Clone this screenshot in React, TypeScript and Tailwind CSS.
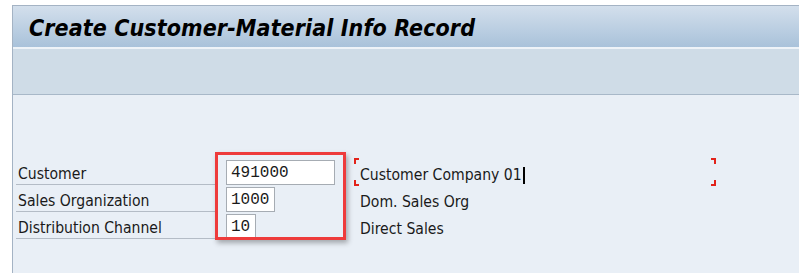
const uiFont = { fontFamily: '"DejaVu Sans Condensed", "DejaVu Sans", sans-serif' };

const fields = [
  { label: "Customer", value: "491000", width: "w-[109px]", text: "Customer Company 01" },
  { label: "Sales Organization", value: "1000", width: "w-[49px]", text: "Dom. Sales Org" },
  { label: "Distribution Channel", value: "10", width: "w-[30px]", text: "Direct Sales" },
];

// little red corner marks around the focused output field
const Corner = ({ className }: { className: string }) => (
  <span className={`absolute h-[6px] w-[5px] border-[#e2231a] ${className}`} />
);

export default function App() {
  return (
    <div className="w-[799px] h-[273px] overflow-hidden bg-white pl-[12px] pt-[5px]" style={uiFont}>
      <div className="flex h-full flex-col border-l border-t border-[#a4b3c4]">
        {/* Title */}
        <div className="flex h-[43px] items-center border-b-2 border-[#eef3f8] bg-gradient-to-b from-[#d3dfec] to-[#a9c2da] pl-[16px] pt-[3px]">
          <h1 className="text-[23px] font-bold italic tracking-[0.1px] text-black">
            Create Customer-Material Info Record
          </h1>
        </div>

        {/* Toolbar */}
        <div className="h-[46px] border-b border-[#a8b8c8] bg-[#cfdce7]" />

        {/* Body */}
        <div className="relative flex-1 bg-[#e9eff6] pt-[63px]">
          <div className="flex flex-col">
            {fields.map((f, i) => (
              <div key={f.label} className="flex h-[27px] items-stretch">
                <div className="ml-[3px] flex w-[200px] items-end border-b border-[#b4bcc6] pb-[2px] pl-[2px] text-[15.6px] leading-[16px] text-[#1a1a1a]">
                  {f.label}
                </div>
                <div className="ml-[10px] flex w-[123px] items-start pt-[2px]">
                  <div
                    className={`${f.width} flex h-[25px] items-center border border-[#a6acb3] bg-white pl-[4px] text-[16px] leading-none text-[#1a1a1a]`}
                    style={{ fontFamily: '"Liberation Mono", monospace' }}
                  >
                    {f.value}
                  </div>
                </div>
                <div className="relative ml-[5px] flex w-[362px] items-end pb-[2px] pl-[6px] text-[15.6px] leading-[16px] text-[#1a1a1a]">
                  {f.text}
                  {i === 0 && <span className="ml-[1px] h-[17px] w-[2px] translate-y-[1px] bg-black" />}
                  {i === 0 && (
                    <>
                      <Corner className="left-0 top-0 border-l-2 border-t-2" />
                      <Corner className="left-0 bottom-[-1px] border-l-2 border-b-2" />
                      <Corner className="right-0 top-0 border-r-2 border-t-2" />
                      <Corner className="right-0 bottom-[-1px] border-r-2 border-b-2" />
                    </>
                  )}
                </div>
              </div>
            ))}
          </div>

          {/* red highlight annotation */}
          <div className="absolute left-[202px] top-[57px] h-[88px] w-[131px] border-[3px] border-[#ee3b3b] shadow-[2px_3px_5px_rgba(0,0,0,0.3)]" />
        </div>
      </div>
    </div>
  );
}
